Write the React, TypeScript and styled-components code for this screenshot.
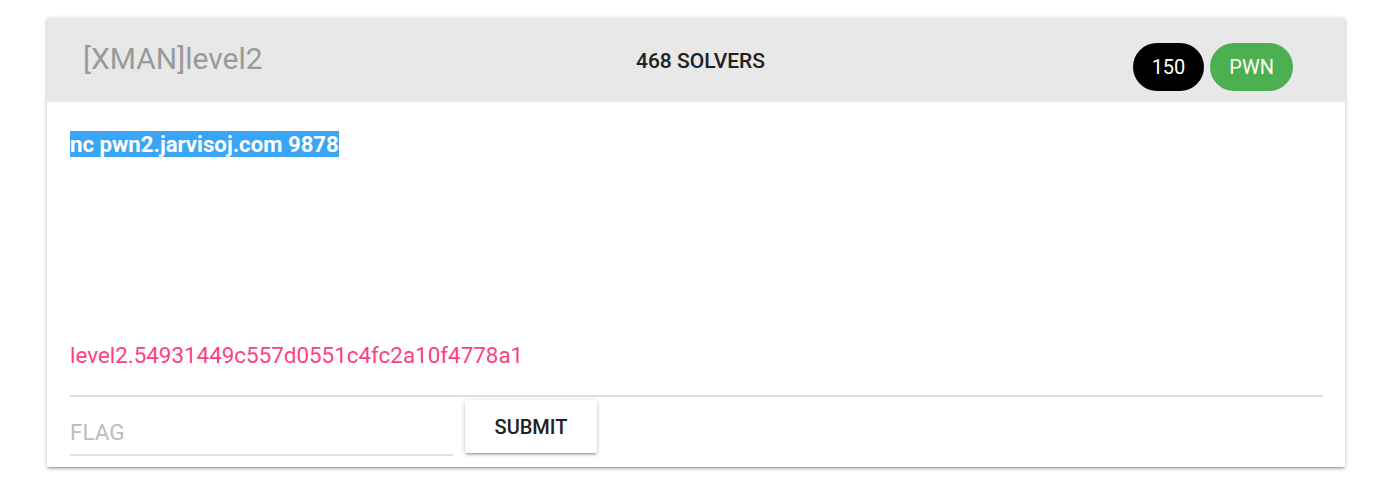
import styled, { createGlobalStyle } from "styled-components";

const GlobalStyle = createGlobalStyle`
  * {
    box-sizing: border-box;
  }
  body {
    margin: 0;
    background: #fff;
    font-family: Roboto, "Liberation Sans", sans-serif;
  }
`;

type Challenge = {
  title: string;
  solvers: number;
  score: number;
  category: string;
  description: string;
  file: string;
};

const challenge: Challenge = {
  title: "[XMAN]level2",
  solvers: 468,
  score: 150,
  category: "PWN",
  description: "nc pwn2.jarvisoj.com 9878",
  file: "level2.54931449c557d0551c4fc2a10f4778a1",
};

const App: React.FC = () => {
  return (
    <>
      <GlobalStyle />
      <Page>
        <Card>
          <Header>
            <Title>{challenge.title}</Title>
            <Solvers>{challenge.solvers} SOLVERS</Solvers>
            <Badges>
              <Badge $bg="#000">{challenge.score}</Badge>
              <Badge $bg="#4caf50">{challenge.category}</Badge>
            </Badges>
          </Header>
          <Body>
            <Description>
              <Selected>{challenge.description}</Selected>
            </Description>
            <FileLink href="#">{challenge.file}</FileLink>
            <FlagForm onSubmit={(e) => e.preventDefault()}>
              <FlagInput placeholder="FLAG" />
              <SubmitButton type="submit">SUBMIT</SubmitButton>
            </FlagForm>
          </Body>
        </Card>
      </Page>
    </>
  );
};
export default App;

const Page = styled.div`
  padding: 18px 51px 18px 47px;
`;

const Card = styled.div`
  background: #fff;
  box-shadow: 0 2px 2px 0 rgba(0, 0, 0, 0.14), 0 3px 1px -2px rgba(0, 0, 0, 0.12),
    0 1px 5px 0 rgba(0, 0, 0, 0.2);
`;

const Header = styled.div`
  display: grid;
  grid-template-columns: 553px auto 1fr;
  align-items: center;
  height: 84px;
  padding: 0 52px 0 36px;
  background: #e8e8e8;
`;

const Title = styled.h3`
  margin: 0;
  font-size: 30px;
  font-weight: 400;
  color: #9a9a9a;
  margin-top: -4px;
`;

const Solvers = styled.span`
  font-size: 21px;
  font-weight: 500;
  color: #212121;
  margin-top: 2px;
`;

const Badges = styled.div`
  display: flex;
  justify-content: flex-end;
  gap: 6px;
  align-self: end;
  margin-bottom: 11px;
`;

const Badge = styled.span<{ $bg: string }>`
  display: inline-flex;
  align-items: center;
  height: 48px;
  padding: 0 19px;
  border-radius: 24px;
  background: ${(p) => p.$bg};
  color: #fff;
  font-size: 20px;
`;

const Body = styled.div`
  padding: 29px 22px 11px 23px;
`;

const Description = styled.p`
  margin: 0;
  min-height: 211px;
  font-size: 22.2px;
  font-weight: 700;
  line-height: 26px;
`;

const Selected = styled.span`
  background: #3ba5f5;
  color: #fff;
`;

const FileLink = styled.a`
  display: block;
  font-size: 22.4px;
  line-height: 26px;
  color: #ff4081;
  text-decoration: none;
  padding-bottom: 27px;
  border-bottom: 2px solid #e0e0e0;
`;

const FlagForm = styled.form`
  display: flex;
  align-items: flex-start;
  gap: 12px;
`;

const FlagInput = styled.input`
  width: 383px;
  height: 59px;
  padding: 12px 0 0;
  border: none;
  border-bottom: 2px solid #e0e0e0;
  outline: none;
  font-family: Roboto, "Liberation Sans", sans-serif;
  font-size: 22.5px;
  color: #212121;
  &::placeholder {
    color: #bdbdbd;
  }
`;

const SubmitButton = styled.button`
  margin-top: 3px;
  width: 132px;
  height: 53px;
  border: none;
  border-radius: 2px;
  background: #fff;
  color: #212121;
  font-family: Roboto, "Liberation Sans", sans-serif;
  font-size: 20px;
  font-weight: 500;
  box-shadow: 0 2px 2px 0 rgba(0, 0, 0, 0.14), 0 3px 1px -2px rgba(0, 0, 0, 0.12),
    0 1px 5px 0 rgba(0, 0, 0, 0.2);
  cursor: pointer;
`;
